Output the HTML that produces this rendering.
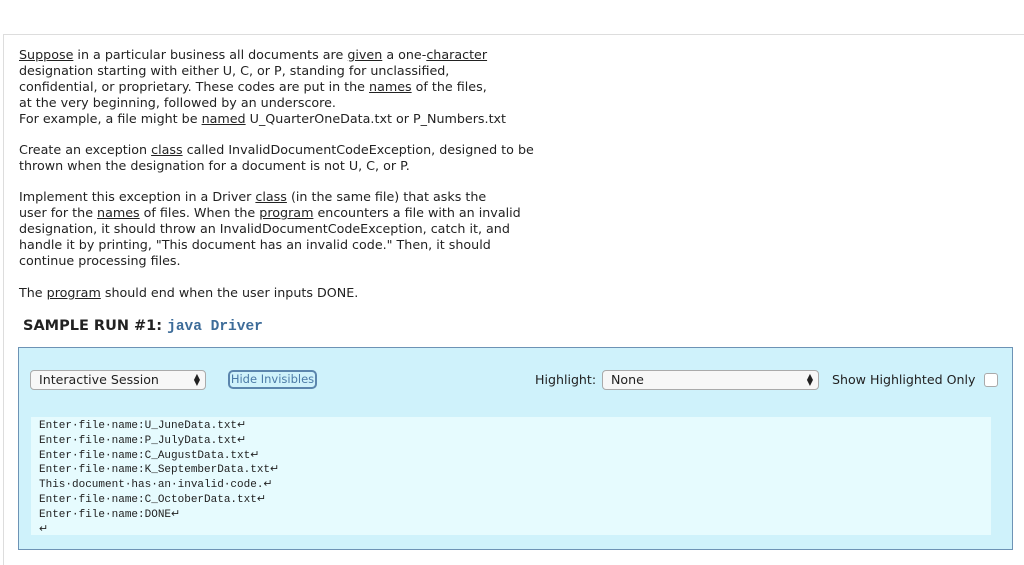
<!DOCTYPE html>
<html><head><style>
body{margin:0;width:1024px;height:554px;background:#fff;position:relative;overflow:hidden;font-family:"DejaVu Sans","Liberation Sans",sans-serif;color:#222}
.frame{position:absolute;left:3px;top:34px;width:1030px;height:530px;border-top:1px solid #ddd;border-left:1px solid #ddd}
.p{position:absolute;left:19px;font-size:12.7px;line-height:16px;color:#222;white-space:nowrap}
u{text-decoration:underline}
.h{position:absolute;left:23px;top:318px;font-size:14.5px;font-weight:bold;color:#222}
.h span{font-family:"Liberation Mono",monospace;color:#3d6c99;font-size:14.5px}
.box{position:absolute;left:18px;top:347px;width:993px;height:201px;background:#cff2fb;border:1px solid #6d93b5}
.sel{position:absolute;border:1px solid #aaa;border-radius:4px;background:#f7f7f7;font-size:12.6px;line-height:18px;padding-left:8px;box-sizing:border-box;height:20px}
.arr{position:absolute;right:5px;top:3px;font-size:8px;line-height:6px;color:#222}
.btn{position:absolute;left:228px;top:370px;width:89px;height:19px;border:2px solid #5b86ad;border-radius:5px;box-sizing:border-box;font-size:11.5px;color:#4b7aa6;text-align:center;line-height:15px}
.lbl{position:absolute;font-size:12.6px;top:372px}
.code{position:absolute;left:31px;top:417px;width:960px;height:118px;background:#e6fbfe}
pre{margin:0;position:absolute;left:8px;top:2px;font-family:"Liberation Mono",monospace;font-size:11px;line-height:14.8px;color:#222}
</style></head><body>
<div class="frame"></div>
<div class="p" style="top:47px"><u>Suppose</u> in a particular business all documents are <u>given</u> a one-<u>character</u><br>designation starting with either U, C, or P, standing for unclassified,<br>confidential, or proprietary. These codes are put in the <u>names</u> of the files,<br>at the very beginning, followed by an underscore.<br>For example, a file might be <u>named</u> U_QuarterOneData.txt or P_Numbers.txt</div>
<div class="p" style="top:142px">Create an exception <u>class</u> called InvalidDocumentCodeException, designed to be<br>thrown when the designation for a document is not U, C, or P.</div>
<div class="p" style="top:189px">Implement this exception in a Driver <u>class</u> (in the same file) that asks the<br>user for the <u>names</u> of files. When the <u>program</u> encounters a file with an invalid<br>designation, it should throw an InvalidDocumentCodeException, catch it, and<br>handle it by printing, "This document has an invalid code." Then, it should<br>continue processing files.</div>
<div class="p" style="top:285px">The <u>program</u> should end when the user inputs DONE.</div>
<div class="h">SAMPLE RUN #1: <span>java Driver</span></div>
<div class="box"></div>
<div class="sel" style="left:30px;top:370px;width:176px">Interactive Session<span class="arr">▲<br>▼</span></div>
<div class="btn">Hide Invisibles</div>
<div class="lbl" style="left:535px">Highlight:</div>
<div class="sel" style="left:602px;top:370px;width:217px">None<span class="arr">▲<br>▼</span></div>
<div class="lbl" style="left:832px">Show Highlighted Only</div>
<div style="position:absolute;left:984px;top:373px;width:12px;height:12px;border:1px solid #aaa;border-radius:3px;background:#fff"></div>
<div class="code"><pre>Enter·file·name:U_JuneData.txt↵
Enter·file·name:P_JulyData.txt↵
Enter·file·name:C_AugustData.txt↵
Enter·file·name:K_SeptemberData.txt↵
This·document·has·an·invalid·code.↵
Enter·file·name:C_OctoberData.txt↵
Enter·file·name:DONE↵
↵</pre></div>
</body></html>
